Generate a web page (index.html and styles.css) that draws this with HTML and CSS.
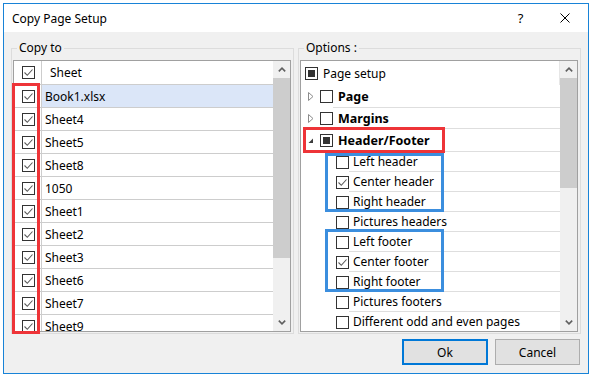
FILE: index.html
```html
<!DOCTYPE html>
<html lang="en">
<head>
  <meta charset="UTF-8">
  <title>Copy Page Setup</title>
  <link rel="stylesheet" href="styles.css">
</head>
<body>
<div class="dialog">
  <div class="titlebar">
    <span class="title">Copy Page Setup</span>
    <span class="tb-btn help">?</span>
    <span class="tb-btn close">
      <svg width="10" height="10" viewBox="0 0 10 10"><path d="M0.5 0.5 L9.5 9.5 M9.5 0.5 L0.5 9.5" stroke="#000" stroke-width="1" fill="none"/></svg>
    </span>
  </div>

  <div class="groups">
    <fieldset class="group">
      <legend>Copy to</legend>
      <div class="listbox">
        <div class="grid">
          <div class="grow head">
            <div class="chk"><span class="cb on"><svg viewBox="0 0 11 11"><path d="M1.5 5.5 L4.3 8.3 L9.5 2.5"/></svg></span></div>
            <div class="name">Sheet</div>
          </div>
          <div class="grow sel">
            <div class="chk"><span class="cb on"><svg viewBox="0 0 11 11"><path d="M1.5 5.5 L4.3 8.3 L9.5 2.5"/></svg></span></div>
            <div class="name">Book1.xlsx</div>
          </div>
          <div class="grow">
            <div class="chk"><span class="cb on"><svg viewBox="0 0 11 11"><path d="M1.5 5.5 L4.3 8.3 L9.5 2.5"/></svg></span></div>
            <div class="name">Sheet4</div>
          </div>
          <div class="grow">
            <div class="chk"><span class="cb on"><svg viewBox="0 0 11 11"><path d="M1.5 5.5 L4.3 8.3 L9.5 2.5"/></svg></span></div>
            <div class="name">Sheet5</div>
          </div>
          <div class="grow">
            <div class="chk"><span class="cb on"><svg viewBox="0 0 11 11"><path d="M1.5 5.5 L4.3 8.3 L9.5 2.5"/></svg></span></div>
            <div class="name">Sheet8</div>
          </div>
          <div class="grow">
            <div class="chk"><span class="cb on"><svg viewBox="0 0 11 11"><path d="M1.5 5.5 L4.3 8.3 L9.5 2.5"/></svg></span></div>
            <div class="name">1050</div>
          </div>
          <div class="grow">
            <div class="chk"><span class="cb on"><svg viewBox="0 0 11 11"><path d="M1.5 5.5 L4.3 8.3 L9.5 2.5"/></svg></span></div>
            <div class="name">Sheet1</div>
          </div>
          <div class="grow">
            <div class="chk"><span class="cb on"><svg viewBox="0 0 11 11"><path d="M1.5 5.5 L4.3 8.3 L9.5 2.5"/></svg></span></div>
            <div class="name">Sheet2</div>
          </div>
          <div class="grow">
            <div class="chk"><span class="cb on"><svg viewBox="0 0 11 11"><path d="M1.5 5.5 L4.3 8.3 L9.5 2.5"/></svg></span></div>
            <div class="name">Sheet3</div>
          </div>
          <div class="grow">
            <div class="chk"><span class="cb on"><svg viewBox="0 0 11 11"><path d="M1.5 5.5 L4.3 8.3 L9.5 2.5"/></svg></span></div>
            <div class="name">Sheet6</div>
          </div>
          <div class="grow">
            <div class="chk"><span class="cb on"><svg viewBox="0 0 11 11"><path d="M1.5 5.5 L4.3 8.3 L9.5 2.5"/></svg></span></div>
            <div class="name">Sheet7</div>
          </div>
          <div class="grow">
            <div class="chk"><span class="cb on"><svg viewBox="0 0 11 11"><path d="M1.5 5.5 L4.3 8.3 L9.5 2.5"/></svg></span></div>
            <div class="name">Sheet9</div>
          </div>
        </div>
        <div class="scrollbar sb-sheets">
          <div class="sb-arrow"><svg width="8" height="5" viewBox="0 0 8 5"><path d="M0.8 4.4 L4 1.2 L7.2 4.4"/></svg></div>
          <div class="thumb"></div>
          <div class="track"></div>
          <div class="sb-arrow"><svg width="8" height="5" viewBox="0 0 8 5"><path d="M0.8 0.6 L4 3.8 L7.2 0.6"/></svg></div>
        </div>
      </div>
    </fieldset>

    <fieldset class="group">
      <legend>Options :</legend>
      <div class="listbox">
        <div class="tree">
          <div class="trow root">
            <span class="cb part"></span>
            <span class="tlabel">Page setup</span>
          </div>
          <div class="trow node">
            <span class="twisty"><svg width="6" height="9" viewBox="0 0 6 9"><path d="M0.5 0.5 L5 4.5 L0.5 8.5 Z" fill="none" stroke="#8c8c8c"/></svg></span>
            <span class="cb"></span>
            <span class="tlabel bold">Page</span>
          </div>
          <div class="trow node margins">
            <span class="twisty"><svg width="6" height="9" viewBox="0 0 6 9"><path d="M0.5 0.5 L5 4.5 L0.5 8.5 Z" fill="none" stroke="#8c8c8c"/></svg></span>
            <span class="cb"></span>
            <span class="tlabel bold">Margins</span>
          </div>
          <div class="trow node">
            <span class="twisty"><svg width="6" height="6" viewBox="0 0 6 6"><path d="M5 0.5 L5 5 L0.5 5 Z" fill="#3c3c3c"/></svg></span>
            <span class="cb part"></span>
            <span class="tlabel bold">Header/Footer</span>
          </div>
          <div class="trow leaf">
            <span class="cb"></span>
            <span class="tlabel">Left header</span>
          </div>
          <div class="trow leaf">
            <span class="cb on"><svg viewBox="0 0 11 11"><path d="M1.5 5.5 L4.3 8.3 L9.5 2.5"/></svg></span>
            <span class="tlabel">Center header</span>
          </div>
          <div class="trow leaf">
            <span class="cb"></span>
            <span class="tlabel">Right header</span>
          </div>
          <div class="trow leaf">
            <span class="cb"></span>
            <span class="tlabel">Pictures headers</span>
          </div>
          <div class="trow leaf">
            <span class="cb"></span>
            <span class="tlabel">Left footer</span>
          </div>
          <div class="trow leaf">
            <span class="cb on"><svg viewBox="0 0 11 11"><path d="M1.5 5.5 L4.3 8.3 L9.5 2.5"/></svg></span>
            <span class="tlabel">Center footer</span>
          </div>
          <div class="trow leaf">
            <span class="cb"></span>
            <span class="tlabel">Right footer</span>
          </div>
          <div class="trow leaf">
            <span class="cb"></span>
            <span class="tlabel">Pictures footers</span>
          </div>
          <div class="trow leaf">
            <span class="cb"></span>
            <span class="tlabel">Different odd and even pages</span>
          </div>
        </div>
        <div class="scrollbar sb-options">
          <div class="sb-arrow"><svg width="8" height="5" viewBox="0 0 8 5"><path d="M0.8 4.4 L4 1.2 L7.2 4.4"/></svg></div>
          <div class="thumb"></div>
          <div class="track"></div>
          <div class="sb-arrow"><svg width="8" height="5" viewBox="0 0 8 5"><path d="M0.8 0.6 L4 3.8 L7.2 0.6"/></svg></div>
        </div>
      </div>
    </fieldset>
  </div>

  <div class="buttons">
    <button class="btn default">Ok</button>
    <button class="btn">Cancel</button>
  </div>

  <!-- annotation frames drawn over the dialog -->
  <div class="mark red mark-sheets"></div>
  <div class="mark red mark-hf"></div>
  <div class="mark blue mark-headers"></div>
  <div class="mark blue mark-footers"></div>
</div>
</body>
</html>
```

FILE: styles.css
```css
body {
  margin: 0;
  background: #fff;
  font-family: "Noto Sans", "Open Sans", sans-serif;
  font-size: 12px;
  color: #000;
}

.dialog {
  position: relative;
  box-sizing: border-box;
  width: 586px;
  height: 371px;
  margin: 3px 0 0 3px;
  border: 1px solid #1883d7;
  background: #f0f0f0;
}

.titlebar {
  display: flex;
  align-items: center;
  height: 28px;
  background: #fff;
}

.title {
  flex: 1;
  padding-left: 8px;
}

.tb-btn {
  display: flex;
  justify-content: center;
  align-items: center;
  width: 46px;
  height: 28px;
}

.help {
  font-size: 13px;
  padding-left: 3px;
  box-sizing: border-box;
}

.groups {
  display: flex;
  gap: 4px;
  padding: 8px 7px 0 7px;
}

.group {
  box-sizing: border-box;
  width: 283px;
  height: 294px;
  margin: 0;
  padding: 4px 2px 1px 1px;
  border: 1px solid #dcdcdc;
  min-width: 0;
}

.group legend {
  margin-left: 4px;
  padding: 0 2px;
  line-height: 16px;
}

.listbox {
  display: flex;
  box-sizing: border-box;
  width: 278px;
  height: 272px;
  border: 1px solid #a0a0a0;
  background: #fff;
  overflow: hidden;
}

/* sheet grid */
.grid {
  flex: 1;
  overflow: hidden;
}

.grow {
  display: flex;
  height: 23px;
  border-bottom: 1px solid #cdcdcd;
}

.grow.head {
  height: 23px;
  border-bottom-color: #cdcdcd;
}

.grow.head {
  height: 24px;
}

.chk {
  display: flex;
  justify-content: center;
  align-items: center;
  width: 26px;
  border-right: 1px solid #cdcdcd;
  padding-left: 1px;
}

.name {
  flex: 1;
  display: flex;
  align-items: center;
  padding-left: 3px;
}

.head .name {
  padding-left: 8px;
}

.sel .name {
  background: #dbe6f8;
}

.grow {
  box-sizing: border-box;
}

/* checkbox */
.cb {
  display: flex;
  justify-content: center;
  align-items: center;
  box-sizing: border-box;
  flex: none;
  width: 13px;
  height: 13px;
  border: 1px solid #333;
  background: #fff;
}

.cb svg {
  width: 11px;
  height: 11px;
}

.cb svg path {
  fill: none;
  stroke: #5a5a5a;
  stroke-width: 1.1;
}

.cb.part::after {
  content: "";
  width: 7px;
  height: 7px;
  background: #333;
}

/* scrollbars */
.scrollbar {
  display: flex;
  flex-direction: column;
  width: 17px;
  flex: none;
  background: #f0f0f0;
}

.sb-arrow {
  display: flex;
  justify-content: center;
  align-items: center;
  height: 17px;
  flex: none;
}

.sb-arrow svg path {
  fill: none;
  stroke: #606060;
  stroke-width: 1.6;
}

.thumb {
  background: #cdcdcd;
  flex: none;
}

.track {
  flex: 1;
}

.sb-sheets .thumb {
  height: 180px;
}

.sb-options .thumb {
  height: 110px;
}

/* options tree */
.tree {
  flex: 1;
  overflow: hidden;
}

.trow {
  display: flex;
  align-items: center;
  box-sizing: border-box;
  height: 20px;
}

.tlabel {
  flex: 1;
  align-self: stretch;
  display: flex;
  align-items: center;
  padding-left: 4px;
  border-bottom: 1px solid #dedede;
}

.trow.root {
  height: 24px;
  padding-left: 4px;
}

.root .tlabel {
  border-bottom: none;
  border-right: 1px solid #e6e6e6;
  padding-left: 5px;
}

.trow.node {
  height: 23px;
}

.trow.node.margins {
  height: 21px;
}

.node .tlabel {
  padding-left: 5px;
}

.bold {
  font-weight: bold;
  font-size: 12.5px;
}

.twisty {
  display: flex;
  justify-content: center;
  align-items: center;
  width: 19px;
  flex: none;
}

.trow.leaf {
  padding-left: 35px;
}

/* buttons */
.buttons {
  display: flex;
  justify-content: flex-end;
  gap: 7px;
  padding: 5px 8px 0 0;
}

.btn {
  box-sizing: border-box;
  width: 85px;
  height: 26px;
  border: 1px solid #adadad;
  background: #e1e1e1;
  font-family: inherit;
  font-size: 12px;
  color: #000;
  padding: 0;
}

.btn.default {
  width: 86px;
  border: 2px solid #0078d7;
}

/* annotation frames */
.mark {
  position: absolute;
  box-sizing: border-box;
  border: 3px solid;
}

.red {
  border-color: #ee3438;
}

.blue {
  border-color: #3b8ede;
}

.mark-sheets {
  left: 8px;
  top: 79px;
  width: 28px;
  height: 251px;
}

.mark-hf {
  left: 299px;
  top: 123px;
  width: 142px;
  height: 26px;
}

.mark-headers {
  left: 321px;
  top: 149px;
  width: 119px;
  height: 59px;
}

.mark-footers {
  left: 321px;
  top: 225px;
  width: 119px;
  height: 63px;
}
```
